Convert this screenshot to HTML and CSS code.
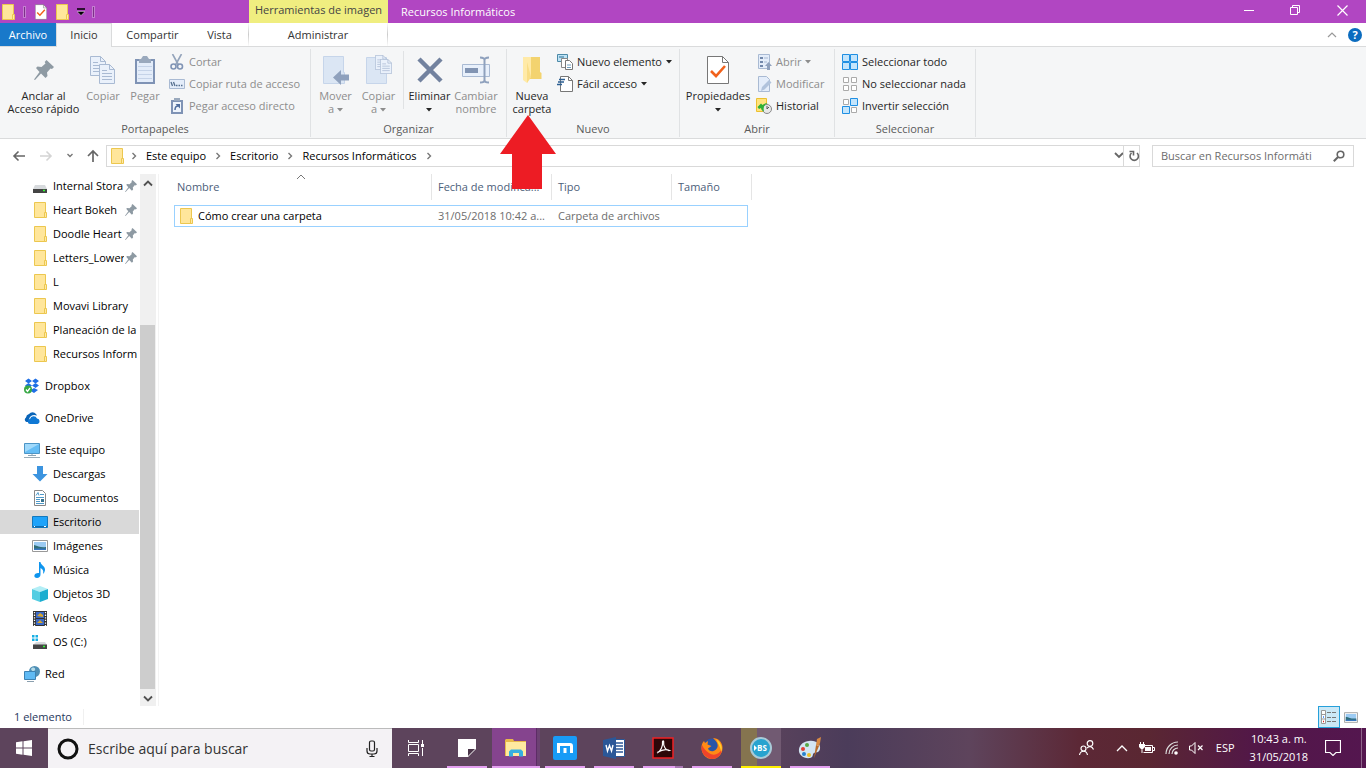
FILE: index.html
```html
<!DOCTYPE html>
<html lang="es">

<head>
  <meta charset="utf-8">
  <meta name="viewport" content="width=device-width, initial-scale=1">
  <title>Recursos Informáticos</title>
  <link rel="stylesheet" href="styles.css">
</head>

<body>
  <!-- shared icons -->
  <svg class="defs" width="0" height="0">
    <symbol id="folder" viewBox="0 0 16 16">
      <path d="M2.500.5h11v15h-11z" fill="#ffe69b" stroke="#ecc74f"/>
      <path d="M12.500 10.500h2v5h-2z" fill="#ffe9a6" stroke="#ecc74f"/>
    </symbol>
    <symbol id="pin" viewBox="0 0 20 20">
      <path d="M12.500 0L20 7l-2 2-1.500-.5-3.500 4 .5 3.500-2 2-4.500-4.500L1 20l-1-.5 5.500-7.500L2 8l1.500-1.500 4 .5 4-3.500-.8-1.500z" fill="#8e9aa3"/>
    </symbol>
    <symbol id="page" viewBox="0 0 16 20">
      <path d="M.5.5h10l5 5v14H.5z" fill="#eaf1fb" stroke="#a9bad3"/>
      <path d="M10.500.5v5h5M3 6.500h5M3 9.500h10M3 12.500h10M3 15.500h10" fill="none" stroke="#a9bad3"/>
    </symbol>
    <symbol id="check" viewBox="0 0 22 28">
      <path d="M.5.5h15l6 6v21H.5z" fill="#fff" stroke="#777"/>
      <path d="M15.500.5v6h6" fill="none" stroke="#777"/>
      <path d="M4 15l5 5 9-10" fill="none" stroke="#f1611b" stroke-width="2.600"/>
    </symbol>
    <symbol id="chev" viewBox="0 0 8 8">
      <path d="M2.500 1l3 3-3 3" fill="none" stroke="#777" stroke-width="1.400"/>
    </symbol>
    <symbol id="tri" viewBox="0 0 6 4">
      <path d="M0 0h6L3 3.500z" fill="currentColor"/>
    </symbol>
    <symbol id="photo" viewBox="0 0 16 12">
      <path d="M.5.5h15v11H.5z" fill="#fff" stroke="#999"/>
      <path d="M2 2h12v8H2z" fill="#9ccbf3"/>
      <path d="M2 5c4 1 7 3 12 2v3H2z" fill="#2f6d77"/>
      <path d="M2 8.500h12V10H2z" fill="#3876c0"/>
    </symbol>
  </svg>

  <header class="titlebar">
    <div class="quick">
      <svg width="16" height="16"><use href="#folder"/></svg>
      <i class="bar"></i>
      <svg class="props" width="12" height="16"><use href="#check"/></svg>
      <svg width="16" height="16"><use href="#folder"/></svg>
      <svg width="8" height="8" viewBox="0 0 8 8"><path d="M0 1h8" stroke="#000" stroke-width="1.500"/><path d="M0 3.500h8L4 7.500z" fill="#000" stroke="#fff" stroke-width=".4"/></svg>
      <i class="bar"></i>
    </div>
    <div class="context">Herramientas de imagen</div>
    <div class="title">Recursos Informáticos</div>
    <div class="controls">
      <button aria-label="Minimizar"><svg width="11" height="11"><path d="M0 5.500h10" stroke="#fff"/></svg></button>
      <button aria-label="Restaurar"><svg width="11" height="11"><path d="M.5 2.500h7v7h-7zM2.500 2.500v-2h7v7h-2" fill="none" stroke="#fff"/></svg></button>
      <button aria-label="Cerrar"><svg width="11" height="11"><path d="M.5.5l10 10M10.500.5l-10 10" stroke="#fff" stroke-width="1.200"/></svg></button>
    </div>
  </header>

  <nav class="tabs">
    <button class="file">Archivo</button>
    <button class="active">Inicio</button>
    <button class="share">Compartir</button>
    <button class="view">Vista</button>
    <button class="manage">Administrar</button>
    <div class="help">
      <svg width="10" height="6"><path d="M1 5l4-4 4 4" fill="none" stroke="#999" stroke-width="1.200"/></svg>
      <button aria-label="Ayuda">?</button>
    </div>
  </nav>

  <section class="ribbon">
    <div class="group clipboard">
      <div class="tools">
        <button class="big pin">
          <svg width="20" height="20"><use href="#pin"/></svg>
          <span>Anclar al<br>Acceso rápido</span>
        </button>
        <button class="big off">
          <svg width="26" height="30" viewBox="0 0 26 30"><use href="#page" x="0" y="1" width="16" height="20"/><use href="#page" x="9" y="9" width="16" height="20"/></svg>
          <span>Copiar</span>
        </button>
        <button class="big off">
          <svg width="22" height="30" viewBox="0 0 22 30"><path d="M1 4h20v25H1z" fill="#7f93b5"/><path d="M3 6h16v21H3z" fill="#e4edfa"/><path d="M5 4h2l2-3h4l2 3h2v4H5z" fill="#9aa9bd"/><path d="M4 11.500h14M4 15.500h14M4 19.500h14M4 23.500h14" stroke="#c5d3e8"/></svg>
          <span>Pegar</span>
        </button>
        <div class="list">
          <button class="off"><svg width="16" height="16"><path d="M3.500 0l6 11M12.500 0l-6 11" stroke="#94a4bb" stroke-width="1.600"/><circle cx="4.500" cy="12.500" r="2.500" fill="none" stroke="#8094b5" stroke-width="1.600"/><circle cx="11" cy="12.500" r="2.500" fill="none" stroke="#8094b5" stroke-width="1.600"/></svg>Cortar</button>
          <button class="off"><svg width="16" height="16"><path d="M.5 3.500h15v9H.5z" fill="#e4edfa" stroke="#a9bad3"/><path d="M2 6l1.500 4M4.500 6L6 10" fill="none" stroke="#556f8f" stroke-width="1.300"/><path d="M7 9.500h7" stroke="#556f8f" stroke-width="1.300" stroke-dasharray="1.500 1"/></svg>Copiar ruta de acceso</button>
          <button class="off"><svg width="16" height="16"><path d="M2 2h12v14H2z" fill="#7f93b5"/><path d="M4 4h8v10H4z" fill="#eef4fc"/><path d="M5 0h6v3H5z" fill="#9aa9bd"/><path d="M6 12c0-3 1-4 3-4" fill="none" stroke="#4f6d9d" stroke-width="1.500"/><path d="M6.500 6H11v4.500z" fill="#4f6d9d"/></svg>Pegar acceso directo</button>
        </div>
      </div>
      <div class="caption">Portapapeles</div>
    </div>

    <div class="group organize">
      <div class="tools">
        <button class="big off">
          <svg width="28" height="30" viewBox="0 0 28 30"><path d="M1.500 1.500h20v16h1v11h-21z" fill="#dbe6f4" stroke="#c6d5ea"/><path d="M11 22.500l8-7.500v4.500h8v6h-8V30z" fill="#8fa1bd"/></svg>
          <span>Mover<br>a <svg class="tri" width="6" height="4"><use href="#tri"/></svg></span>
        </button>
        <button class="big off">
          <svg width="28" height="30" viewBox="0 0 28 30"><path d="M1.500 2.500h20v26h-20z" fill="#dbe6f4" stroke="#c6d5ea"/><use href="#page" x="10" y="0" width="12" height="15"/><use href="#page" x="15" y="4" width="12" height="15"/></svg>
          <span>Copiar<br>a <svg class="tri" width="6" height="4"><use href="#tri"/></svg></span>
        </button>
        <i class="split"></i>
        <button class="big">
          <svg width="26" height="26" viewBox="0 0 26 26"><path d="M2 2l22 22M24 2L2 24" stroke="#72829f" stroke-width="4.500"/></svg>
          <span>Eliminar<br><svg class="tri" width="6" height="4"><use href="#tri"/></svg></span>
        </button>
        <button class="big off">
          <svg width="28" height="28" viewBox="0 0 28 28"><path d="M.5 8.500h27v12H.5z" fill="#e8f0fb" stroke="#a9bad3"/><path d="M3 12h13v5H3z" fill="#8194b3"/><path d="M18 1.500c3 0 4.500.5 4.500 2.500v20c0 2-1.500 2.500-4.500 2.500M27 1.500c-3 0-4.500.5-4.500 2.500v20c0 2 1.500 2.500 4.500 2.500" fill="none" stroke="#8fa1bd" stroke-width="2"/></svg>
          <span>Cambiar<br>nombre</span>
        </button>
      </div>
      <div class="caption">Organizar</div>
    </div>

    <div class="group new">
      <div class="tools">
        <button class="big">
          <svg width="20" height="28" viewBox="0 0 20 28"><path d="M7 1h11v15l1.500 1v6H5z" fill="#f3d36f"/><path d="M1 1h8v20l-4 6-4-3z" fill="#ffeaa8"/><path d="M9 21l-4 6V6z" fill="#f9dd86"/></svg>
          <span>Nueva<br>carpeta</span>
        </button>
        <svg class="arrow" width="56" height="74" viewBox="0 0 56 74"><path d="M28 0l28 39H42v35H12V39H0z" fill="#ed1c24"/></svg>
        <div class="list">
          <button><svg width="16" height="16"><path d="M.5.5h10v7H.5z" fill="#bfe3f5" stroke="#4c8aa8"/><path d="M2 3h5" stroke="#286f96"/><path d="M4.500 4.500h6v9h-6z" fill="#fff" stroke="#888"/><path d="M8.500 6.500h4l3 3v6h-7z" fill="#fff" stroke="#777"/><path d="M10 11h4M10 13.500h4" stroke="#6f9fc0"/></svg>Nuevo elemento <svg class="tri" width="6" height="4"><use href="#tri"/></svg></button>
          <button><svg width="16" height="16"><path d="M3.500.5h8l4 4v11h-12z" fill="#fff" stroke="#777"/><path d="M11.500.5v4h4" fill="none" stroke="#777"/><path d="M2 3.500h6M1 6h6M0 8.500h5" stroke="#2c5f93" stroke-width="1.300"/></svg>Fácil acceso <svg class="tri" width="6" height="4"><use href="#tri"/></svg></button>
        </div>
      </div>
      <div class="caption">Nuevo</div>
    </div>

    <div class="group open">
      <div class="tools">
        <button class="big">
          <svg width="22" height="28"><use href="#check"/></svg>
          <span>Propiedades<br><svg class="tri" width="6" height="4"><use href="#tri"/></svg></span>
        </button>
        <div class="list">
          <button class="off"><svg width="16" height="16"><path d="M2.500.5h11v14h-11z" fill="#e4edfa" stroke="#a9bad3"/><path d="M4 3h3v2H4zM4 7h3v2H4zM4 11h3v2H4z" fill="#7288ab"/><path d="M8 4h4M8 8h3" stroke="#a9bad3"/><path d="M11 16v-4H9l3.500-4 3.500 4h-2v4z" fill="#8fa1bd"/></svg>Abrir <svg class="tri" width="6" height="4"><use href="#tri"/></svg></button>
          <button class="off"><svg width="16" height="16"><path d="M2.500.5h8l3 3v12h-11z" fill="#e4edfa" stroke="#a9bad3"/><path d="M5 15l1-4 7-7 2.500 2.500-7 7z" fill="#b1c3dc"/></svg>Modificar</button>
          <button><svg width="16" height="16"><path d="M.5.5h10v13H.5z" fill="#ffe37d" stroke="#ecc030"/><circle cx="11" cy="11" r="4.500" fill="#e8e8e8" stroke="#888"/><path d="M11 8v3l2-2" fill="none" stroke="#555"/><path d="M1.500 9L5 5.500 6.500 7c2-1.500 4-2 5-1.500C8 6.500 7 9.500 8 13.500c-2-1-3-2-3-3.500l-2 1z" fill="#2eb135"/></svg>Historial</button>
        </div>
      </div>
      <div class="caption">Abrir</div>
    </div>

    <div class="group select">
      <div class="tools">
        <div class="list">
          <button><svg width="16" height="16"><path d="M.5.5h7v7h-7zM8.500.5h7v7h-7zM.5 8.500h7v7h-7zM8.500 8.500h7v7h-7z" fill="#c4e5fc" stroke="#1f8fe3"/></svg>Seleccionar todo</button>
          <button><svg width="16" height="16"><path d="M1.500 1.500h5v5h-5zM9.500 1.500h5v5h-5zM1.500 9.500h5v5h-5zM9.500 9.500h5v5h-5z" fill="#fff" stroke="#aaa"/></svg>No seleccionar nada</button>
          <button><svg width="16" height="16"><path d="M1.500 1.500h5v5h-5zM9.500 9.500h5v5h-5z" fill="#fff" stroke="#aaa"/><path d="M8.500.5h7v7h-7zM.5 8.500h7v7h-7z" fill="#c4e5fc" stroke="#1f8fe3"/></svg>Invertir selección</button>
        </div>
      </div>
      <div class="caption">Seleccionar</div>
    </div>
  </section>

  <div class="address">
    <div class="nav">
      <button aria-label="Atrás"><svg width="14" height="12"><path d="M13 6H2M6.500 1.500L2 6l4.500 4.500" fill="none" stroke="#666" stroke-width="1.600"/></svg></button>
      <button aria-label="Adelante"><svg width="14" height="12"><path d="M1 6h11M7.500 1.500L12 6l-4.500 4.500" fill="none" stroke="#d4d4d4" stroke-width="1.600"/></svg></button>
      <button aria-label="Recientes"><svg width="8" height="6"><path d="M1.500 1L4 3.500 6.500 1" fill="none" stroke="#777" stroke-width="1.400"/></svg></button>
      <button aria-label="Subir"><svg width="12" height="14"><path d="M6 13V2M1 7l5-5 5 5" fill="none" stroke="#666" stroke-width="1.700"/></svg></button>
    </div>
    <div class="path">
      <svg width="16" height="16"><use href="#folder"/></svg>
      <svg width="8" height="8"><use href="#chev"/></svg>
      <a href="#">Este equipo</a>
      <svg width="8" height="8"><use href="#chev"/></svg>
      <a href="#">Escritorio</a>
      <svg width="8" height="8"><use href="#chev"/></svg>
      <a href="#">Recursos Informáticos</a>
      <svg width="8" height="8"><use href="#chev"/></svg>
      <button class="drop" aria-label="Ubicaciones"><svg width="10" height="7"><path d="M1 1l4 4 4-4" fill="none" stroke="#666" stroke-width="1.800"/></svg></button>
      <button class="reload" aria-label="Actualizar"><svg width="12" height="12"><path d="M9 3a4.200 4.200 0 1 1-5.500 0" fill="none" stroke="#666" stroke-width="1.600"/><path d="M1.500 1.500h4v4" fill="none" stroke="#666" stroke-width="1.600"/></svg></button>
    </div>
    <div class="search">
      <input type="text" aria-label="Buscar" placeholder="Buscar en Recursos Informáti">
      <svg width="12" height="12"><circle cx="7.500" cy="4.500" r="3.300" fill="none" stroke="#666" stroke-width="1.600"/><path d="M5 7L.8 11.200" stroke="#666" stroke-width="2"/></svg>
    </div>
  </div>

  <main>
    <aside>
      <ul class="tree">
        <li><svg width="16" height="16"><path d="M3 7h10l2 4H1z" fill="#d7dadd"/><path d="M1 11h14v4H1z" fill="#444"/><path d="M11 12.500h2" stroke="#3f3" stroke-width="1.500"/></svg><span>Internal Stora</span><svg class="pinned" width="12" height="12"><use href="#pin"/></svg></li>
        <li><svg width="16" height="16"><use href="#folder"/></svg><span>Heart Bokeh</span><svg class="pinned" width="12" height="12"><use href="#pin"/></svg></li>
        <li><svg width="16" height="16"><use href="#folder"/></svg><span>Doodle Heart</span><svg class="pinned" width="12" height="12"><use href="#pin"/></svg></li>
        <li><svg width="16" height="16"><use href="#folder"/></svg><span>Letters_Lower</span><svg class="pinned" width="12" height="12"><use href="#pin"/></svg></li>
        <li><svg width="16" height="16"><use href="#folder"/></svg><span>L</span></li>
        <li><svg width="16" height="16"><use href="#folder"/></svg><span>Movavi Library</span></li>
        <li><svg width="16" height="16"><use href="#folder"/></svg><span>Planeación de la</span></li>
        <li><svg width="16" height="16"><use href="#folder"/></svg><span>Recursos Inform</span></li>
        <li class="root"><svg width="16" height="16"><path d="M1 3l3.500-2.500L8 3 4.500 5.500zM8 3l3.500-2.500L15 3l-3.500 2.500zM1 7.500L4.500 5 8 7.500 4.500 10zM8 7.500L11.500 5 15 7.500 11.500 10zM6 12.500l4-2.500 4 2-4 3z" fill="#1f6fe5"/><circle cx="4" cy="11.500" r="4" fill="#37a845"/><path d="M2 11.500l1.500 2L6 10" fill="none" stroke="#fff" stroke-width="1.300"/></svg><span>Dropbox</span></li>
        <li class="root"><svg width="16" height="16"><path d="M4 12H2.500A2.500 2.500 0 0 1 2 7.500 4 4 0 0 1 5 4a4.500 4.500 0 0 1 7 0l1 1.500C9 4 6 6 5.500 8z" fill="#0a64b8"/><path d="M6.500 14a2.500 2.500 0 0 1-.5-5 3.700 3.700 0 0 1 7-.5 2.800 2.800 0 0 1 .5 5.500z" fill="#0f78d4"/></svg><span>OneDrive</span></li>
        <li class="root"><svg width="16" height="16"><path d="M.5 1.500h15v10H.5z" fill="#65bdf5" stroke="#4c95c6"/><path d="M1 2h14L1 10z" fill="#a0d9fb"/><path d="M8 12v2M4 13.500h8" stroke="#8ba4b3"/><path d="M0 15.500h16" stroke="#9badb8"/></svg><span>Este equipo</span></li>
        <li><svg width="16" height="16"><path d="M5 0h6v8h4.500L8 15.500.5 8H5z" fill="#3c94df"/></svg><span>Descargas</span></li>
        <li><svg width="16" height="16"><path d="M2.500.5h8l3 3v12h-11z" fill="#fff" stroke="#888"/><path d="M4 5.500l2-3 1 3M8 4.500h4M4 7.500h8M4 9.500h4M4 11.500h4M4 13.500h8" fill="none" stroke="#4e99c9"/><path d="M9 9h3v3H9z" fill="#36728e"/></svg><span>Documentos</span></li>
        <li class="current"><svg width="16" height="16"><path d="M.5 2.500h15v11H.5z" fill="#1ea3fa" stroke="#1378bd"/><path d="M1 12.500h14" stroke="#116bad"/><path d="M2 12.500h1M12 12.500h2" stroke="#fff"/></svg><span>Escritorio</span></li>
        <li><svg width="16" height="12"><use href="#photo"/></svg><span>Imágenes</span></li>
        <li><svg width="16" height="16"><path d="M7 0h1.500c0 3 5 4 4.500 8-.3 2-1 3-2 4 1-4-1-5-2.500-6v6.500c0 2-1.500 3.500-3.500 3.500-3 0-3.500-3-1-4.500 1-.6 2-.7 3-.4z" fill="#0f95ee"/></svg><span>Música</span></li>
        <li><svg width="16" height="16"><path d="M0 3l8-3 8 3-8 3z" fill="#b2eef6"/><path d="M0 3l8 3v10l-8-3z" fill="#53cde2"/><path d="M16 3L8 6v10l8-3z" fill="#1badd0"/></svg><span>Objetos 3D</span></li>
        <li><svg width="16" height="16"><path d="M1 1h14v15H1z" fill="#333"/><path d="M4 2h8v6H4zM4 9h8v6H4z" fill="#3968c7"/><path d="M5 6l3-3 3 2v2zM5 13l3-3 3 3z" fill="#d6a52c"/><path d="M2.500 2v14M13.500 2v14" stroke="#fff" stroke-width="1.300" stroke-dasharray="1.300 1.300"/></svg><span>Vídeos</span></li>
        <li><svg width="16" height="16"><path d="M0 1h2.500v2.500H0zM3.500 1H6v2.500H3.500zM0 4.500h2.500V7H0zM3.500 4.500H6V7H3.500z" fill="#17afe4"/><path d="M4 8h9l2 3H1z" fill="#d7dadd"/><path d="M1 10.500h14V15H1z" fill="#444"/><path d="M11 12.500h2" stroke="#3f3" stroke-width="1.500"/></svg><span>OS (C:)</span></li>
        <li class="root"><svg width="16" height="16"><circle cx="10.500" cy="5.500" r="5.500" fill="#4f8fb5"/><path d="M7 3c2-3 5-1 4 1s-3 2-4-1z" fill="#b5dbe8"/><path d="M.5 5.500h11v8H.5z" fill="#5fbaf4" stroke="#3c82b3"/><path d="M3 15.500h7" stroke="#8a9fae"/></svg><span>Red</span></li>
      </ul>
      <div class="scroll">
        <button aria-label="Arriba"><svg width="10" height="7"><path d="M1 5.500l4-4 4 4" fill="none" stroke="#505050" stroke-width="1.800"/></svg></button>
        <div class="track"><div class="thumb"></div></div>
        <button aria-label="Abajo"><svg width="10" height="7"><path d="M1 1.500l4 4 4-4" fill="none" stroke="#505050" stroke-width="1.800"/></svg></button>
      </div>
    </aside>

    <div class="files">
      <table>
        <thead>
          <tr>
            <th class="name">Nombre<svg class="sort" width="10" height="6"><path d="M1 5l4-4 4 4" fill="none" stroke="#777"/></svg></th>
            <th class="date">Fecha de modifica...</th>
            <th class="type">Tipo</th>
            <th class="size">Tamaño</th>
          </tr>
        </thead>
        <tbody>
          <tr>
            <td><div class="cell first"><svg width="16" height="16"><use href="#folder"/></svg>Cómo crear una carpeta</div></td>
            <td><div class="cell">31/05/2018 10:42 a...</div></td>
            <td><div class="cell">Carpeta de archivos</div></td>
            <td><div class="cell last"></div></td>
          </tr>
        </tbody>
      </table>
    </div>
  </main>

  <div class="status">
    <span class="count">1 elemento</span>
    <div class="views">
      <button class="on" aria-label="Detalles"><svg width="16" height="14"><path d="M.5.5h4v13h-4zM.5 4.500h4M.5 9h4" fill="#fff" stroke="#999"/><path d="M2 7h1" stroke="#27f" stroke-width="1.500"/><path d="M2 11.500h1" stroke="#d22" stroke-width="1.500"/><path d="M6 2.500h10M6 7.500h10M6 11.500h10" stroke="#777" stroke-dasharray="4 1"/></svg></button>
      <button aria-label="Iconos grandes"><svg width="14" height="11"><use href="#photo"/></svg></button>
    </div>
  </div>

  <footer class="taskbar">
    <button class="start" aria-label="Inicio"><svg width="16" height="16"><path d="M0 2.200l6.500-.9v6.200H0zM7.500 1.200L16 0v7.500H7.500zM0 8.500h6.500v6.200L0 13.800zM7.500 8.500H16V16l-8.500-1.200z" fill="#fff"/></svg></button>
    <label class="cortana">
      <svg width="22" height="22"><circle cx="11" cy="11" r="9" fill="none" stroke="#111" stroke-width="3"/></svg>
      <input type="text" aria-label="Buscar en Windows" placeholder="Escribe aquí para buscar">
      <svg width="12" height="18"><rect x="3.500" y="1" width="5" height="10" rx="1.500" fill="none" stroke="#222" stroke-width="1.200"/><path d="M1 8v3c0 2 1 3 3 3h4c2 0 3-1 3-3V8M6 14v3M3.500 16.500h5" fill="none" stroke="#222" stroke-width="1.200"/></svg>
    </label>
    <button class="taskview" aria-label="Vista de tareas"><svg width="18" height="16"><path d="M1.500 0v2.500h10V0M1.500 16v-2.500h10V16M1.500 4.500h10v7h-10zM15.500 0v4M15.500 8v8" fill="none" stroke="#fff"/><path d="M14 4h3v3h-3z" fill="#fff"/></svg></button>
    <div class="apps">
      <button aria-label="Notas"><svg width="18" height="18"><path d="M0 0h18v9h-9v9H0z" fill="#fff"/><path d="M11 11h6l-6 6z" fill="#4a3549"/><path d="M18 9v1l-8 8H9V9z" fill="#fff"/><path d="M10 10h7l-7 7z" fill="#4a3549"/></svg></button>
      <button class="explorer" aria-label="Explorador"><svg width="22" height="20"><path d="M0 2l1-1h7l1 2h12v15H0z" fill="#e9b94a"/><path d="M1 4h20v14H1z" fill="#ffe9a0"/><path d="M4 18.500v-5l2-2h10l2 2v5h-4V15H8v3.500z" fill="#36b0e0"/></svg></button>
      <button aria-label="Maxthon"><svg width="24" height="24"><rect width="24" height="24" rx="2" fill="#189bf6"/><path d="M5.500 17V8.500h11.500a1.500 1.500 0 0 1 1.500 1.500v7M12 17v-5" fill="none" stroke="#fff" stroke-width="3"/></svg></button>
      <button aria-label="Word"><svg width="22" height="22"><path d="M11 2.500h10.500v17H11z" fill="#fff" stroke="#2b5797"/><path d="M13 6h7M13 9h7M13 12h7M13 15h7" stroke="#2b5797" stroke-width="1.300"/><path d="M0 3l13-3v22L0 19z" fill="#2b5797"/><path d="M3 8l1.500 6L6.500 8.500l2 5.500L10 8" fill="none" stroke="#fff" stroke-width="1.400"/></svg></button>
      <button class="acrobat" aria-label="Acrobat"><svg width="22" height="22"><path d="M1 1h20v20H1z" fill="#2c0708" stroke="#ed2224" stroke-width="1.500"/><path d="M5 16c4-2 6-7 5.500-11 0-1.500 1.500-1.500 1.200.5C11 9 14 14 17.500 13.500c-3-1.500-8-.5-12 1.800" fill="none" stroke="#fff" stroke-width="1.200"/></svg></button>
      <button aria-label="Firefox"><svg width="22" height="22"><circle cx="11" cy="10" r="8.500" fill="#2a55a8"/><path d="M12 1c5 0 9.500 4 9.500 10S17 22 11 22 .5 17 .5 11c0-3 .5-5 2.500-7l1 2 3-2-.5 3.500 4 1.500-3.500 2.500c1 3 5 4 8 1s2-7-3-11.500z" fill="#ff8a16"/><path d="M1 8c-2 7 3 13 9.500 14C17 22 21 17 21 12c-3 6-9 7-13 4-3-2-5-4-7-8z" fill="#f0442b"/><path d="M15 2c4 3 7 7 5.500 13-1-4-3-8-5.500-13z" fill="#ffcf2e"/></svg></button>
      <button class="bs" aria-label="BS"><svg width="22" height="22"><circle cx="11" cy="11" r="10" fill="#28a3cf" stroke="#a9cbd8" stroke-width="2"/><path d="M4 8l3 3-3 3z" fill="#fff"/><text x="7" y="14">BS</text></svg></button>
      <button aria-label="Paint"><svg width="24" height="24"><path d="M11 5c7-1 12 3 11 8-1 4-4 3-6 4s0 4-4 5C6 23 0 19 1 13c1-5 5-7.500 10-8z" fill="#d3e5f3"/><circle cx="5" cy="13" r="2" fill="#df3f35"/><circle cx="9" cy="9" r="2" fill="#57a846"/><circle cx="6" cy="18" r="2" fill="#2781cf"/><circle cx="11" cy="19" r="2" fill="#eebf24"/><path d="M16 22l2-13 3 1z" fill="#b96c2b"/><path d="M18 9l1-6 4-2-1 6-1 3z" fill="#d98b43"/></svg></button>
    </div>
    <div class="tray">
      <svg width="16" height="16"><circle cx="11" cy="3.500" r="2.800" fill="none" stroke="#fff" stroke-width="1.200"/><circle cx="4.500" cy="8.500" r="2.500" fill="none" stroke="#fff" stroke-width="1.200"/><path d="M8 8c2-2 5-2 6.500 1.500M.5 15c1-5 7-5 8 0" fill="none" stroke="#fff" stroke-width="1.200"/></svg>
      <svg class="up" width="12" height="8"><path d="M1 7l5-5 5 5" fill="none" stroke="#fff" stroke-width="1.300"/></svg>
      <svg class="battery" width="16" height="12"><path d="M4.500 3.500h9v7h-9M13.500 5.500h2v3h-2" fill="none" stroke="#fff"/><path d="M6 5h6v4H6zM0 2h6v3L4 7H2L0 5zM1 0h1v2H1zM4 0h1v2H4z" fill="#fff"/><path d="M3 7v4" stroke="#fff"/></svg>
      <svg class="wifi" width="14" height="14"><path d="M1 13A12 12 0 0 1 13 1M4 13a9 9 0 0 1 9-9M7 13a6 6 0 0 1 6-6" fill="none" stroke="#ddd" stroke-width="1.200"/><circle cx="11" cy="12" r="1.800" fill="#fff"/></svg>
      <svg class="volume" width="14" height="12"><path d="M.5 4h2l3.500-3.500v11L2.500 8h-2z" fill="none" stroke="#fff"/><path d="M9 3.500l4.500 4.500M13.500 3.500L9 8" stroke="#fff" stroke-width="1.200"/></svg>
      <span class="lang">ESP</span>
      <div class="clock">10:43 a. m.<br>31/05/2018</div>
      <svg class="notices" width="16" height="16"><path d="M.5.5h15v12H11l-3 3-3-3H.5z" fill="none" stroke="#fff" stroke-width="1.200"/></svg>
    </div>
    <button class="desktop" aria-label="Mostrar escritorio"></button>
  </footer>
</body>

</html>
```

FILE: styles.css
```css
* {
  box-sizing: border-box;
}

body {
  display: flex;
  flex-direction: column;
  height: 100vh;
  margin: 0;
  overflow: hidden;
  background: #fff;
  color: #000;
  font: 11px/16px "Open Sans", "Noto Sans", sans-serif;
}

button,
input {
  margin: 0;
  padding: 0;
  border: 0;
  background: none;
  color: inherit;
  font: inherit;
}

svg {
  flex: none;
}

.defs {
  position: absolute;
}

/* title bar */
.titlebar {
  display: flex;
  flex: none;
  height: 23px;
  background: #b146c2;
}

.quick {
  display: flex;
  align-items: center;
  gap: 7px;
  width: 249px;
}

.quick .bar {
  width: 3px;
  height: 12px;
  border: 1px solid #c47fd0;
  background: #7d3189;
}

.quick .props {
  margin-left: 2px;
}

.context {
  width: 139px;
  background: #f0ee80;
  color: #444;
  line-height: 20px;
  text-align: center;
}

.title {
  flex: 1;
  padding-left: 13px;
  color: #fff;
  line-height: 24px;
}

.controls {
  display: flex;
}

.controls button {
  display: flex;
  align-items: center;
  justify-content: center;
  width: 46px;
  height: 20px;
}

.controls button:last-child {
  width: 48px;
}

/* ribbon tabs */
.tabs {
  display: flex;
  flex: none;
  height: 24px;
  border-bottom: 1px solid #dadbdc;
  color: #333;
}

.tabs > button {
  height: 23px;
  text-align: center;
}

.tabs .file {
  width: 56px;
  background: #1979ca;
  color: #fff;
}

.tabs .active {
  width: 56px;
  height: 24px;
  padding-bottom: 2px;
  border: 1px solid #dadbdc;
  border-bottom: 0;
  background: #f5f6f7;
}

.tabs .share {
  width: 81px;
}

.tabs .view {
  width: 53px;
}

.tabs .manage {
  width: 140px;
  margin-left: 2px;
  border: solid #ddd;
  border-width: 0 1px;
  border-image: linear-gradient(#fff, #ccc 50%, #fff) 1;
}

.tabs .help {
  display: flex;
  align-items: center;
  gap: 11px;
  margin-left: auto;
  padding-right: 4px;
}

.help button {
  width: 14px;
  height: 14px;
  border-radius: 50%;
  background: #0b6cbf;
  color: #fff;
  font-weight: bold;
  line-height: 14px;
}

/* ribbon */
.ribbon {
  display: flex;
  flex: none;
  height: 92px;
  padding: 2px 0 1px;
  border-bottom: 1px solid #dadbdc;
  background: #f5f6f7;
  color: #262626;
}

.group {
  display: flex;
  flex-direction: column;
  border-right: 1px solid #e0e2e4;
}

.clipboard {
  width: 311px;
}

.organize {
  width: 196px;
}

.new {
  width: 173px;
}

.open {
  width: 155px;
}

.select {
  width: 141px;
}

.tools {
  position: relative;
  display: flex;
  flex: 1;
  padding: 2px 3px 0;
}

.clipboard .tools {
  padding-left: 5px;
}

.select .tools {
  padding-left: 7px;
}

.caption {
  color: #5a5a5a;
  text-align: center;
}

.big {
  display: flex;
  flex-direction: column;
  align-items: center;
  width: 42px;
  line-height: 13px;
  white-space: nowrap;
}

.big > svg {
  height: 38px;
}

.big.pin {
  width: 77px;
}

.organize .big {
  width: 43px;
}

.organize .big:last-child {
  width: 50px;
}

.open .big {
  width: 70px;
}

.new .big {
  width: 44px;
}

.off {
  color: #8d8d8d;
}

.tri {
  vertical-align: middle;
}

.split {
  width: 1px;
  height: 58px;
  margin: 0 4px 0 3px;
  background: #e0e2e4;
}

.list {
  padding-left: 3px;
}

.list button {
  display: flex;
  align-items: center;
  gap: 4px;
  height: 22px;
  white-space: nowrap;
}

.select .list {
  padding-left: 0;
}

.arrow {
  position: absolute;
  top: 66px;
  left: -7px;
  z-index: 2;
}

/* address bar */
.address {
  display: flex;
  flex: none;
  align-items: center;
  height: 35px;
  padding: 0 12px 2px 0;
}

.nav {
  display: flex;
  align-items: center;
  justify-content: space-between;
  width: 106px;
  padding: 0 7px 0 12px;
}

.nav button {
  display: flex;
}

.path {
  display: flex;
  flex: 1;
  align-items: center;
  gap: 8px;
  height: 22px;
  padding-left: 2px;
  border: 1px solid #d9d9d9;
}

.path svg:first-child {
  margin-right: -3px;
}

.path a {
  color: #000;
  text-decoration: none;
}

.drop {
  display: flex;
  margin: 0 -6px 0 auto;
}

.reload {
  display: flex;
  align-items: center;
  height: 20px;
  padding: 0 2px 0 3px;
  border-left: 1px solid #d9d9d9;
}

.reload svg {
  margin: 0 1px;
}

.search {
  display: flex;
  align-items: center;
  width: 202px;
  height: 22px;
  margin-left: 12px;
  padding: 0 8px;
  border: 1px solid #d9d9d9;
}

.search input {
  flex: 1;
  min-width: 0;
}

input::placeholder {
  color: #6d6d6d;
  opacity: 1;
}

/* navigation pane */
main {
  display: flex;
  flex: 1;
  min-height: 0;
}

aside {
  display: flex;
  width: 159px;
  padding-right: 2px;
  border-right: 1px solid #f3f3f3;
}

.tree {
  flex: 1;
  min-width: 0;
  margin: 0;
  padding: 0;
  overflow: hidden;
  list-style: none;
}

.tree li {
  display: flex;
  align-items: center;
  gap: 5px;
  height: 24px;
  margin-right: 1px;
  padding-left: 32px;
  white-space: nowrap;
}

.tree li span {
  flex: 1;
  overflow: hidden;
}

.tree li.root {
  margin-top: 8px;
  padding-left: 24px;
}

.tree .pinned {
  margin: 0 2px 0 -4px;
}

.tree .current {
  background: #d9d9d9;
}

.scroll {
  display: flex;
  flex-direction: column;
  width: 16px;
  background: #f0f0f0;
}

.scroll button {
  height: 17px;
}

.track {
  display: flex;
  flex: 1;
  align-items: flex-end;
}

.thumb {
  width: 15px;
  height: 73%;
  background: #cdcdcd;
}

/* file list */
.files {
  flex: 1;
  padding-left: 15px;
}

table {
  border-collapse: separate;
  border-spacing: 0;
  table-layout: fixed;
  width: 578px;
}

th {
  position: relative;
  height: 26px;
  padding: 0 0 0 6px;
  border-right: 1px solid #e5e5e5;
  color: #4c607a;
  font-weight: normal;
  text-align: left;
  white-space: nowrap;
}

th.name {
  width: 258px;
  padding-left: 3px;
}

th.date,
th.type {
  width: 120px;
}

.sort {
  position: absolute;
  top: 0;
  left: 122px;
}

td {
  padding: 5px 0 0;
  color: #6d6d6d;
}

.cell {
  display: flex;
  align-items: center;
  height: 22px;
  padding-left: 6px;
  border: solid #99d1ff;
  border-width: 1px 0;
  white-space: nowrap;
}

.cell.first {
  gap: 4px;
  padding-left: 3px;
  border-left-width: 1px;
  color: #000;
}

.cell.last {
  margin-right: 4px;
  border-right-width: 1px;
}

/* status bar */
.status {
  display: flex;
  flex: none;
  align-items: center;
  justify-content: space-between;
  height: 22px;
  padding: 0 4px 0 14px;
  color: #26375c;
}

.count {
  padding-right: 11px;
  border-right: 1px solid #f0f0f0;
}

.views {
  display: flex;
}

.views button {
  display: flex;
  align-items: center;
  justify-content: center;
  width: 22px;
  height: 22px;
}

.views .on {
  border: 1px solid #26a0da;
  background: #cbe8f6;
}

/* taskbar */
.taskbar {
  display: flex;
  flex: none;
  height: 40px;
  background: linear-gradient(90deg, #5d445c 0, #5d445c 55%, #4b3c5a 62%, #5e445c 71%, #5c2836 79%, #5a2732 84%, #521748 92%, #54164f 100%);
  color: #fff;
}

.start,
.taskview {
  display: flex;
  align-items: center;
  justify-content: center;
  width: 48px;
}

.cortana {
  display: flex;
  align-items: center;
  width: 344px;
  padding: 0 14px 0 9px;
  border-top: 1px solid #bbb;
  background: #f4f2f5;
}

.cortana input {
  flex: 1;
  margin-left: 9px;
  font-size: 14px;
}

.cortana input::placeholder {
  color: #333;
}

.apps {
  display: flex;
  gap: 9px;
  padding-left: 7px;
}

.apps button {
  display: flex;
  align-items: center;
  justify-content: center;
  width: 40px;
  padding-top: 2px;
  border-bottom: 2px solid #e39ff0;
}

.apps .explorer {
  width: 48px;
  margin: 0 -4px;
  background: linear-gradient(90deg, #85448e 44px, #5d2c66 44px, #5d2c66 45px, #6c4272 45px);
}

.apps .acrobat {
  border-image: linear-gradient(90deg, #e39ff0 31px, #a878b3 31px) 2;
  border-width: 0 0 2px;
}

.apps .bs {
  border-color: #fff000;
  background: linear-gradient(90deg, #85744f 40%, #715a72 40%);
}

.bs text {
  fill: #fff;
  font-size: 8px;
  font-weight: bold;
}

.tray {
  display: flex;
  align-items: center;
  margin-left: auto;
  padding-right: 20px;
}

.tray .up {
  margin-left: 21px;
}

.tray .battery {
  margin-left: 11px;
}

.tray .wifi,
.tray .volume {
  margin-left: 10px;
}

.lang {
  margin-left: 13px;
}

.clock {
  margin: 0 17px 0 15px;
  line-height: 18px;
  text-align: center;
}

.desktop {
  width: 5px;
  border-left: 1px solid #8d6489;
}
```
